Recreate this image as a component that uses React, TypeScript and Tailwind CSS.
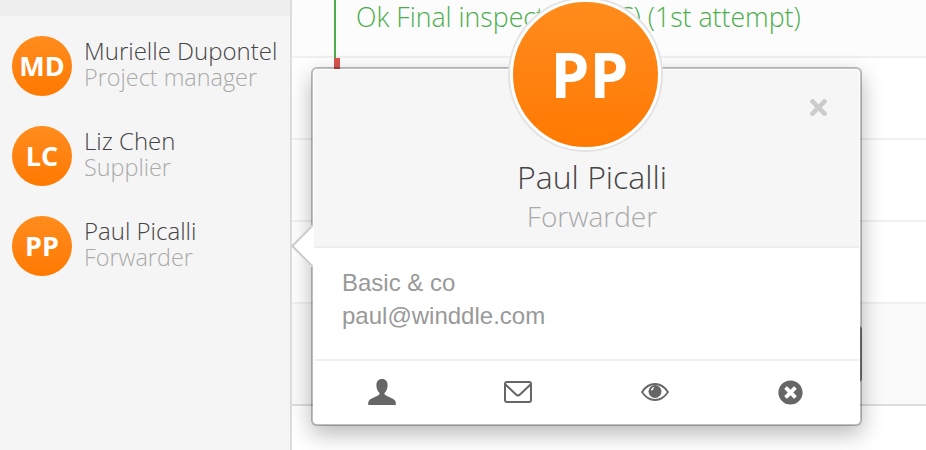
import { FaTimes, FaTimesCircle } from "react-icons/fa";

const contacts = [
    { initials: "MD", name: "Murielle Dupontel", role: "Project manager" },
    { initials: "LC", name: "Liz Chen", role: "Supplier" },
    { initials: "PP", name: "Paul Picalli", role: "Forwarder" },
];

const openSans = "font-['Open_Sans',sans-serif]";

function Sidebar() {
    return (
        <aside className="w-[292px] h-full shrink-0 bg-[#f5f5f5] border-r-2 border-[#ddd]">
            <div className="h-4 bg-[#eeeeee]" />
            <div className="pt-5 pl-3 flex flex-col gap-[30px]">
                {contacts.map((contact) => (
                    <div key={contact.initials} className="flex items-center gap-[12px] h-[60px]">
                        <div className="w-[60px] h-[60px] rounded-full bg-gradient-to-b from-[#ff8c1c] to-[#ff7900] flex items-center justify-center text-white text-[27px] font-bold">
                            {contact.initials}
                        </div>
                        <div className="leading-[26px] font-light -mt-1">
                            <div className="text-[24px] text-[#444]">{contact.name}</div>
                            <div className="text-[23.4px] text-[#aaa]">{contact.role}</div>
                        </div>
                    </div>
                ))}
            </div>
        </aside>
    );
}

function Timeline() {
    return (
        <main className="flex-1 flex flex-col bg-white">
            <div className="h-[58px] bg-[#fcfcfc] border-b-2 border-[#f0f0f0] flex">
                <div className="ml-[42px] w-[2px] h-[58px] bg-[#4cae4c] shrink-0" />
                <div className="ml-[20px] text-[26.7px] leading-[33px] font-light text-[#4cae4c] whitespace-nowrap">
                    Ok Final inspection (QC) (1st attempt)
                </div>
            </div>
            <div className="h-[82px] border-b-2 border-[#f0f0f0]">
                <div className="ml-[42px] w-[6px] h-full bg-[#d9534f]" />
            </div>
            <div className="h-[82px] border-b-2 border-[#f0f0f0]" />
            <div className="h-[82px] border-b-2 border-[#f0f0f0]" />
            <div className="h-[102px] bg-[#fafafa] border-b-2 border-[#ddd] pt-[22px]">
                <div className="ml-[470px] w-[100px] h-[56px] bg-[#888] rounded" />
            </div>
        </main>
    );
}

function UserIcon() {
    return (
        <svg width="28" height="26" viewBox="0 0 28 26" fill="#666">
            <path d="M14 0c3.700 0 5.600 2.500 5.600 6.200 0 3-1.100 5.700-2.700 7.300-.6.700-.6 1.700.1 2.300 1.300 1.100 3.500 2.100 6.100 3.100 2.600 1 4.300 2.300 4.700 4.500V26H.2v-2.600c.4-2.200 2.100-3.500 4.700-4.500 2.600-1 4.800-2 6.100-3.100.7-.6.700-1.600.1-2.300-1.600-1.600-2.700-4.300-2.700-7.300C8.400 2.500 10.300 0 14 0z" />
        </svg>
    );
}

function MailIcon() {
    return (
        <svg width="28" height="22" viewBox="0 0 28 22" fill="none" stroke="#666" strokeWidth="2">
            <rect x="1" y="1" width="26" height="20" rx="2" />
            <path d="M1.500 3.500 12 13.500c1.200 1.100 2.800 1.100 4 0L26.500 3.500" />
        </svg>
    );
}

function EyeIcon() {
    return (
        <svg width="28" height="18" viewBox="0 0 28 18">
            <path d="M1 9C4.500 3.700 9 1 14 1s9.500 2.700 13 8c-3.500 5.300-8 8-13 8S4.500 14.300 1 9z" fill="none" stroke="#666" strokeWidth="1.800" />
            <circle cx="14" cy="8.500" r="6.500" fill="#666" />
            <path d="M9.800 7.500c.4-2 1.900-3.300 3.700-3.500-.8 1-1.200 1.600-1.400 2.900-.7.100-1.500.3-2.300.6z" fill="#fff" />
        </svg>
    );
}

function ContactPopover() {
    const actions = [
        <UserIcon key="user" />,
        <MailIcon key="mail" />,
        <EyeIcon key="eye" />,
        <FaTimesCircle key="remove" size={25} color="#666" />,
    ];

    return (
        <div className="absolute left-[311px] top-[67px] w-[551px] h-[359px] bg-white bg-clip-padding rounded-md border-2 border-black/25 shadow-[0_8px_22px_rgba(0,0,0,0.28)] font-light">
            {/* Arrow */}
            <div className="absolute left-[-16px] top-[162px] w-[30px] h-[30px] rotate-45 bg-white border-l-2 border-b-2 border-[#ccc]" />

            <div className="relative mx-px mt-px h-[178px] bg-[#f6f6f6] border-b-2 border-[#eee] rounded-t flex flex-col items-center pt-[87px]">
                <FaTimes size={25} color="#ccc" className="absolute right-[28px] top-[25px]" />
                <div className="text-[32px] leading-[40px] text-[#444] ml-[11px]">Paul Picalli</div>
                <div className="text-[28px] leading-[38px] text-[#aaa] ml-[11px]">Forwarder</div>
            </div>

            <div className="relative h-[113px] mx-px border-b-2 border-[#f0f0f0] px-7 pt-[18px] font-['Liberation_Sans',sans-serif] font-normal text-[24px] leading-[33px] text-[#999]">
                <div>Basic &amp; co</div>
                <div>paul@winddle.com</div>
            </div>

            <div className="flex h-[62px] mx-px items-center">
                {actions.map((icon, idx) => (
                    <div key={idx} className="flex-1 flex items-center justify-center">
                        {icon}
                    </div>
                ))}
            </div>

            <div className="absolute left-[196px] top-[-71px] w-[153px] h-[153px] rounded-full border-[4px] border-white outline-2 outline-[#e2e2e2] -outline-offset-1 bg-gradient-to-b from-[#ff8c1c] to-[#ff7900] bg-origin-border flex items-center justify-center text-white text-[62px] font-bold pl-2">
                PP
            </div>
        </div>
    );
}

export default function App() {
    return (
        <div className={`relative w-[926px] h-[450px] overflow-hidden bg-white flex ${openSans}`}>
            <Sidebar />
            <Timeline />
            <ContactPopover />
        </div>
    );
}
